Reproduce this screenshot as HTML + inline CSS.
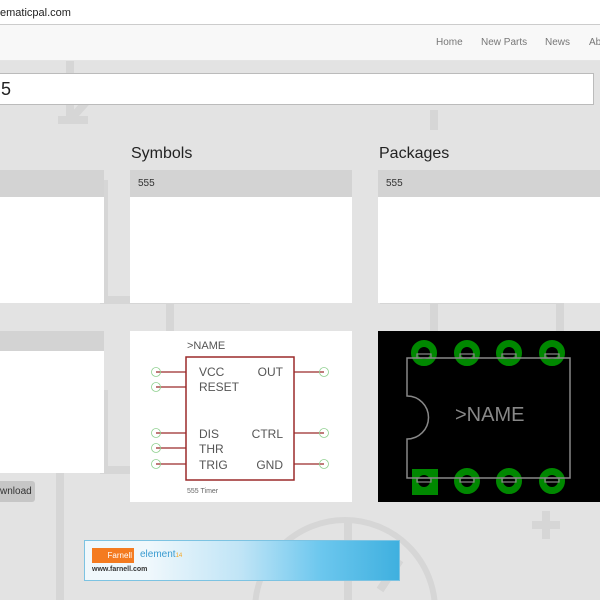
<!DOCTYPE html>
<html><head><style>
html,body{margin:0;width:600px;height:600px;overflow:hidden}
body{background:#e3e3e3;font-family:"Liberation Sans",Arial,sans-serif;position:relative}
.a{position:absolute}
</style></head><body>
<svg class="a" style="left:0;top:0" width="600" height="600">
<g stroke="#d6d6d6" stroke-width="8" fill="none">
<path d="M70 60V120M58 120H88M104 180V300H250M170 300V500M104 390V470H190M60 470V600M70 120L88 100"/>
<path d="M434 110V130M434 300V360M520 360V450H560M380 300H560V350"/>
<circle cx="345" cy="610" r="90" stroke-width="6"/>
<path d="M348 520V600M380 590L400 560"/>
<path d="M532 525H560M546 511V539"/>
</g></svg>
<div class="a" style="left:0;top:0;width:600px;height:24px;background:#fff;border-bottom:1px solid #ccc;font-size:11px;line-height:26px;color:#222">ematicpal.com</div>
<div class="a" style="left:0;top:25px;width:600px;height:35px;background:#f8f8f8;border-bottom:1px solid #e5e5e5;font-size:10px;color:#777">
<span class="a" style="left:436px;top:12px">Home</span><span class="a" style="left:481px;top:12px">New Parts</span><span class="a" style="left:545px;top:12px">News</span><span class="a" style="left:589px;top:12px">Ab</span></div>
<div class="a" style="left:-5px;top:73px;width:597px;height:30px;background:#fff;border:1px solid #bbb;font-size:18px;line-height:30px;color:#222">&nbsp;5</div>
<div class="a" style="left:131px;top:145px;font-size:16px;color:#222">Symbols</div>
<div class="a" style="left:379px;top:145px;font-size:16px;color:#222">Packages</div>
<div class="a" style="left:0;top:170px;width:104px;height:27px;background:#d3d3d3"></div>
<div class="a" style="left:0;top:197px;width:104px;height:106px;background:#fff"></div>
<div class="a" style="left:130px;top:170px;width:222px;height:27px;background:#d3d3d3;font-size:10px;line-height:27px;color:#333;text-indent:8px">555</div>
<div class="a" style="left:130px;top:197px;width:222px;height:106px;background:#fff"></div>
<div class="a" style="left:378px;top:170px;width:222px;height:27px;background:#d3d3d3;font-size:10px;line-height:27px;color:#333;text-indent:8px">555</div>
<div class="a" style="left:378px;top:197px;width:222px;height:106px;background:#fff"></div>
<div class="a" style="left:0;top:331px;width:104px;height:20px;background:#d3d3d3"></div>
<div class="a" style="left:0;top:351px;width:104px;height:122px;background:#fff"></div>
<div class="a" style="left:0;top:481px;width:35px;height:21px;background:#c6c6c6;border-radius:0 3px 3px 0;font-size:10px;line-height:21px;color:#333">wnload</div>
<svg class="a" style="left:130px;top:331px" width="222" height="171" font-family="Liberation Sans,Arial,sans-serif">
<rect width="222" height="171" fill="#fff"/>
<text x="57" y="18" font-size="11" fill="#555">&gt;NAME</text>
<rect x="56" y="26" width="108" height="123" fill="none" stroke="#9b2a2a" stroke-width="1.5"/>
<g stroke="#9b2a2a" stroke-width="1.2"><path d="M26 41H56M26 56H56M26 102H56M26 117H56M26 133H56M164 41H194M164 102H194M164 133H194"/></g>
<g fill="none" stroke="#8fd08f" stroke-width="0.8"><circle cx="26" cy="41" r="4.5"/><circle cx="26" cy="56" r="4.5"/><circle cx="26" cy="102" r="4.5"/><circle cx="26" cy="117" r="4.5"/><circle cx="26" cy="133" r="4.5"/><circle cx="194" cy="41" r="4.5"/><circle cx="194" cy="102" r="4.5"/><circle cx="194" cy="133" r="4.5"/></g>
<g font-size="12" fill="#555"><text x="69" y="45">VCC</text><text x="69" y="60">RESET</text><text x="69" y="107">DIS</text><text x="69" y="122">THR</text><text x="69" y="138">TRIG</text>
<text x="153" y="45" text-anchor="end">OUT</text><text x="153" y="107" text-anchor="end">CTRL</text><text x="153" y="138" text-anchor="end">GND</text></g>
<text x="57" y="162" font-size="7" fill="#666">555 Timer</text>
</svg>
<svg class="a" style="left:378px;top:331px" width="222" height="171" font-family="Liberation Sans,Arial,sans-serif">
<rect width="222" height="171" fill="#000"/>
<g fill="none" stroke="#008800" stroke-width="7"><circle cx="46" cy="22" r="9.5"/><circle cx="89" cy="22" r="9.5"/><circle cx="131" cy="22" r="9.5"/><circle cx="174" cy="22" r="9.5"/><circle cx="89" cy="150" r="9.5"/><circle cx="131" cy="150" r="9.5"/><circle cx="174" cy="150" r="9.5"/></g>
<path d="M34 138h26v26h-26zM46 150m-6 0a6 6 0 1 0 12 0a6 6 0 1 0-12 0" fill="#008800" fill-rule="evenodd"/>
<path d="M29 27H192V147H29V108A21 21 0 0 0 29 65Z" fill="none" stroke="#888" stroke-width="1.5"/>
<g fill="none" stroke="#888" stroke-width="1.2"><rect x="39" y="23" width="14" height="4"/><rect x="82" y="23" width="14" height="4"/><rect x="124" y="23" width="14" height="4"/><rect x="167" y="23" width="14" height="4"/><rect x="39" y="147" width="14" height="4"/><rect x="82" y="147" width="14" height="4"/><rect x="124" y="147" width="14" height="4"/><rect x="167" y="147" width="14" height="4"/></g>
<text x="77" y="90" font-size="20" fill="#888">&gt;NAME</text>
</svg>
<div class="a" style="left:84px;top:540px;width:314px;height:39px;background:linear-gradient(90deg,#f0f8fc 20%,#bfe4f6 50%,#6cc7ee 75%,#3fb0df);border:1px solid #7cc3e2"></div>
<div class="a" style="left:92px;top:548px;width:42px;height:15px;background:#f47b20;color:#fff;font-size:8px;line-height:15px;text-align:right;padding-right:2px;box-sizing:border-box">Farnell</div>
<div class="a" style="left:140px;top:549px;font-size:10px;color:#3a9bd0">element<span style="font-size:6px;color:#f5a623">14</span></div>
<div class="a" style="left:92px;top:566px;font-size:7px;font-weight:bold;color:#333">www.farnell.com</div>
</body></html>
